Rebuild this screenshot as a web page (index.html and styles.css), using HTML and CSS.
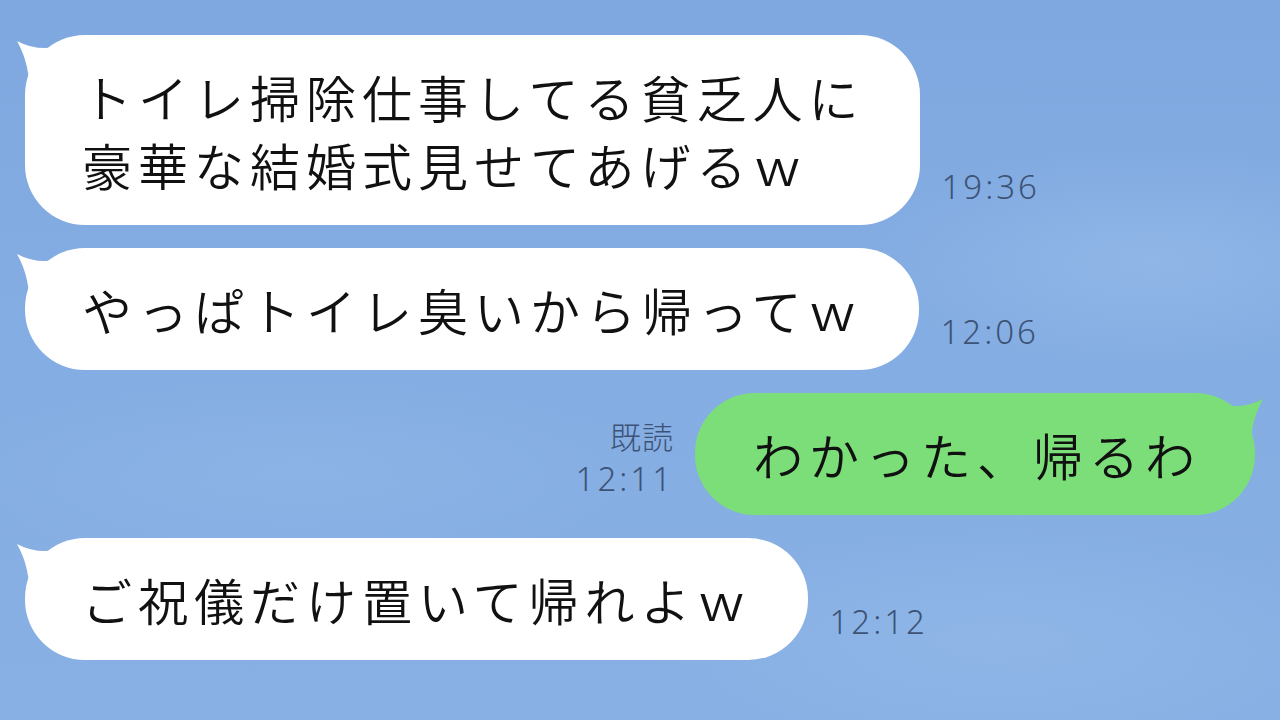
FILE: index.html
```html
<!DOCTYPE html>
<html lang="ja">
<head>
<meta charset="utf-8">
<link rel="stylesheet" href="styles.css">
</head>
<body>
<main class="chat">
  <div class="row in">
    <div class="bubble white">
      <svg class="tail tail-l" viewBox="0 0 60 60" width="60" height="60"><path d="M2 3 Q22 14 48 8 L48 58 L14 58 Q16 28 2 3 Z" fill="#fff"/></svg>
      <p class="msg">トイレ掃除仕事してる貧乏人に<br>豪華な結婚式見せてあげるｗ</p>
    </div>
    <div class="meta"><span class="time">19:36</span></div>
  </div>
  <div class="row in">
    <div class="bubble white">
      <svg class="tail tail-l" viewBox="0 0 60 60" width="60" height="60"><path d="M2 3 Q22 14 48 8 L48 58 L14 58 Q16 28 2 3 Z" fill="#fff"/></svg>
      <p class="msg">やっぱトイレ臭いから帰ってｗ</p>
    </div>
    <div class="meta"><span class="time">12:06</span></div>
  </div>
  <div class="row out">
    <div class="meta right"><span class="read">既読</span><span class="time">12:11</span></div>
    <div class="bubble green">
      <svg class="tail tail-r" viewBox="0 0 60 60" width="60" height="60"><path d="M58 3 Q38 14 12 8 L12 58 L46 58 Q44 28 58 3 Z" fill="#7cde78"/></svg>
      <p class="msg">わかった、帰るわ</p>
    </div>
  </div>
  <div class="row in">
    <div class="bubble white">
      <svg class="tail tail-l" viewBox="0 0 60 60" width="60" height="60"><path d="M2 3 Q22 14 48 8 L48 58 L14 58 Q16 28 2 3 Z" fill="#fff"/></svg>
      <p class="msg">ご祝儀だけ置いて帰れよｗ</p>
    </div>
    <div class="meta"><span class="time">12:12</span></div>
  </div>
</main>
</body>
</html>
```
FILE: styles.css
```css
html, body {
  margin: 0;
  height: 100%;
}
body {
  width: 1280px;
  height: 720px;
  overflow: hidden;
  background:
    radial-gradient(ellipse 420px 160px at 1150px 260px, rgba(160,195,235,0.45), rgba(160,195,235,0) 70%),
    radial-gradient(ellipse 520px 140px at 300px 470px, rgba(150,188,232,0.35), rgba(150,188,232,0) 70%),
    radial-gradient(ellipse 500px 160px at 1000px 640px, rgba(155,192,234,0.4), rgba(155,192,234,0) 70%),
    linear-gradient(180deg, #7fa8e0 0%, #84ade3 50%, #88b0e4 100%);
  font-family: "Noto Sans CJK JP", "Noto Sans", sans-serif;
}
.chat {
  display: flex;
  flex-direction: column;
  gap: 23px;
  padding: 35px 25px 0 25px;
}
.row {
  display: flex;
  align-items: flex-end;
}
.row.out {
  justify-content: flex-end;
}
.bubble {
  position: relative;
  border-radius: 60px;
  padding: 27px 55px 27px 57px;
}
.white { background: #fff; }
.green { background: #7cde78; padding-left: 58px; padding-right: 54px; }
.msg {
  position: relative;
  margin: 0;
  font-size: 50px;
  font-weight: 350;
  line-height: 68px;
  letter-spacing: 6px;
  color: #111;
  white-space: nowrap;
}
.tail {
  position: absolute;
  top: 3px;
}
.tail-l { left: -10px; }
.tail-r { right: -10px; }
.meta {
  display: flex;
  flex-direction: column;
  margin: 0 0 20px 22px;
  color: #3d5376;
  font-family: "Noto Sans", "Noto Sans CJK JP", sans-serif;
}
.meta.right {
  align-items: flex-end;
  margin: 0 21px 18px 0;
}
.time {
  font-size: 33px;
  line-height: 36px;
  letter-spacing: 3px;
  font-weight: 300;
}
.read {
  font-family: "Noto Sans CJK JP", sans-serif;
  font-size: 31px;
  font-weight: 300;
  line-height: 34px;
  letter-spacing: 1px;
  margin-bottom: 8px;
}
```
